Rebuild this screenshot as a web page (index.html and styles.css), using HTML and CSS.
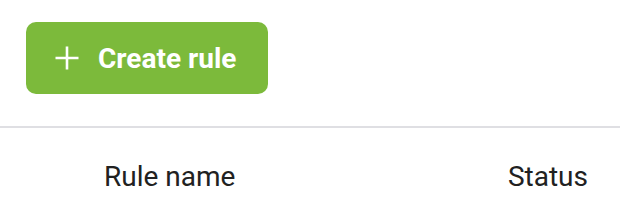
FILE: index.html
```html
<!DOCTYPE html>
<html lang="en">
<head>
  <meta charset="UTF-8">
  <title>Rules</title>
  <link rel="stylesheet" href="styles.css">
</head>
<body>
  <!-- Toolbar with the create button -->
  <div class="toolbar">
    <button class="create-btn">
      <svg class="plus-icon" width="24" height="24" viewBox="0 0 24 24">
        <path d="M12 0.5v23M0.5 12h23" stroke="#fff" stroke-width="2.6" fill="none"/>
      </svg>
      <span>Create rule</span>
    </button>
  </div>

  <!-- Table header -->
  <div class="rules-table">
    <div class="table-head">
      <div class="col-name">Rule name</div>
      <div class="col-status">Status</div>
    </div>
  </div>
</body>
</html>
```

FILE: styles.css
```css
body {
  margin: 0;
  font-family: Roboto, "Liberation Sans", sans-serif;
  color: #212121;
  background: #fff;
}
.toolbar {
  padding: 22px 26px 32px;
}
.create-btn {
  display: flex;
  align-items: center;
  gap: 19px;
  width: 242px;
  height: 72px;
  padding: 0 0 0 29px;
  border: none;
  border-radius: 10px;
  background: #7cba3b;
  color: #fff;
  font-family: Roboto, "Liberation Sans", sans-serif;
  font-size: 28px;
  font-weight: 700;
}
.plus-icon {
  flex-shrink: 0;
}
.rules-table {
  border-top: 2px solid #dfdfe3;
}
.table-head {
  display: flex;
  justify-content: space-between;
  align-items: center;
  height: 97px;
  padding: 0 32px 0 104px;
  font-size: 28px;
}
```
